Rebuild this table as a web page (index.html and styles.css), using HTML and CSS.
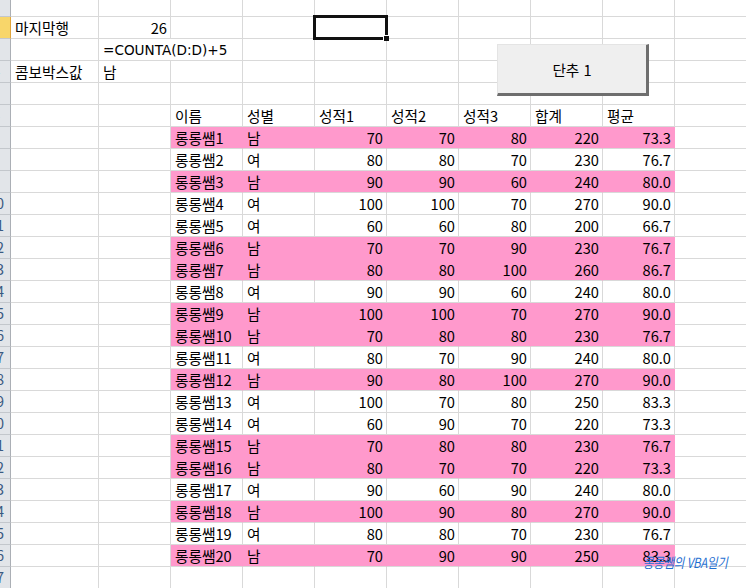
FILE: index.html
```html
<!DOCTYPE html>
<html lang="ko">
<head>
<meta charset="utf-8">
<title>Sheet</title>
<link rel="stylesheet" href="styles.css">
</head>
<body>
<div class="sheet">
  <!-- row 1 -->
  <div class="h"><span>1</span></div><div class="c"></div><div class="c"></div><div class="c"></div><div class="c"></div><div class="c"></div><div class="c"></div><div class="c"></div><div class="c"></div><div class="c"></div><div class="c"></div>
  <!-- row 2 -->
  <div class="h sel"><span>2</span></div><div class="c">마지막행</div><div class="c n">26</div><div class="c"></div><div class="c"></div><div class="c active"><div class="cursor"><i class="handle"></i></div></div><div class="c"></div><div class="c"></div><div class="c"></div><div class="c"></div><div class="c"></div>
  <!-- row 3 -->
  <div class="h"><span>3</span></div><div class="c"></div><div class="c span2 formula">=COUNTA(D:D)+5</div><div class="c"></div><div class="c"></div><div class="c"></div><div class="c"></div><div class="c"></div><div class="c"></div><div class="c"></div>
  <!-- row 4 -->
  <div class="h"><span>4</span></div><div class="c">콤보박스값</div><div class="c">남</div><div class="c"></div><div class="c"></div><div class="c"></div><div class="c"></div><div class="c"></div><div class="c"></div><div class="c"></div><div class="c"></div>
  <!-- row 5 -->
  <div class="h"><span>5</span></div><div class="c"></div><div class="c"></div><div class="c"></div><div class="c"></div><div class="c"></div><div class="c"></div><div class="c"></div><div class="c"></div><div class="c"></div><div class="c"></div>
  <!-- row 6 -->
  <div class="h"><span>6</span></div><div class="c"></div><div class="c"></div><div class="c">이름</div><div class="c">성별</div><div class="c">성적1</div><div class="c">성적2</div><div class="c">성적3</div><div class="c">합계</div><div class="c">평균</div><div class="c"></div>
  <!-- data -->
  <div class="h"><span>7</span></div><div class="c"></div><div class="c"></div><div class="c p">롱롱쌤1</div><div class="c p">남</div><div class="c p n">70</div><div class="c p n">70</div><div class="c p n">80</div><div class="c p n">220</div><div class="c p n">73.3</div><div class="c"></div>
  <div class="h"><span>8</span></div><div class="c"></div><div class="c"></div><div class="c">롱롱쌤2</div><div class="c">여</div><div class="c n">80</div><div class="c n">80</div><div class="c n">70</div><div class="c n">230</div><div class="c n">76.7</div><div class="c"></div>
  <div class="h"><span>9</span></div><div class="c"></div><div class="c"></div><div class="c p">롱롱쌤3</div><div class="c p">남</div><div class="c p n">90</div><div class="c p n">90</div><div class="c p n">60</div><div class="c p n">240</div><div class="c p n">80.0</div><div class="c"></div>
  <div class="h"><span>10</span></div><div class="c"></div><div class="c"></div><div class="c">롱롱쌤4</div><div class="c">여</div><div class="c n">100</div><div class="c n">100</div><div class="c n">70</div><div class="c n">270</div><div class="c n">90.0</div><div class="c"></div>
  <div class="h"><span>11</span></div><div class="c"></div><div class="c"></div><div class="c">롱롱쌤5</div><div class="c">여</div><div class="c n">60</div><div class="c n">60</div><div class="c n">80</div><div class="c n">200</div><div class="c n">66.7</div><div class="c"></div>
  <div class="h"><span>12</span></div><div class="c"></div><div class="c"></div><div class="c p pb">롱롱쌤6</div><div class="c p pb">남</div><div class="c p pb n">70</div><div class="c p pb n">70</div><div class="c p pb n">90</div><div class="c p pb n">230</div><div class="c p pb n">76.7</div><div class="c"></div>
  <div class="h"><span>13</span></div><div class="c"></div><div class="c"></div><div class="c p">롱롱쌤7</div><div class="c p">남</div><div class="c p n">80</div><div class="c p n">80</div><div class="c p n">100</div><div class="c p n">260</div><div class="c p n">86.7</div><div class="c"></div>
  <div class="h"><span>14</span></div><div class="c"></div><div class="c"></div><div class="c">롱롱쌤8</div><div class="c">여</div><div class="c n">90</div><div class="c n">90</div><div class="c n">60</div><div class="c n">240</div><div class="c n">80.0</div><div class="c"></div>
  <div class="h"><span>15</span></div><div class="c"></div><div class="c"></div><div class="c p pb">롱롱쌤9</div><div class="c p pb">남</div><div class="c p pb n">100</div><div class="c p pb n">100</div><div class="c p pb n">70</div><div class="c p pb n">270</div><div class="c p pb n">90.0</div><div class="c"></div>
  <div class="h"><span>16</span></div><div class="c"></div><div class="c"></div><div class="c p">롱롱쌤10</div><div class="c p">남</div><div class="c p n">70</div><div class="c p n">80</div><div class="c p n">80</div><div class="c p n">230</div><div class="c p n">76.7</div><div class="c"></div>
  <div class="h"><span>17</span></div><div class="c"></div><div class="c"></div><div class="c">롱롱쌤11</div><div class="c">여</div><div class="c n">80</div><div class="c n">70</div><div class="c n">90</div><div class="c n">240</div><div class="c n">80.0</div><div class="c"></div>
  <div class="h"><span>18</span></div><div class="c"></div><div class="c"></div><div class="c p">롱롱쌤12</div><div class="c p">남</div><div class="c p n">90</div><div class="c p n">80</div><div class="c p n">100</div><div class="c p n">270</div><div class="c p n">90.0</div><div class="c"></div>
  <div class="h"><span>19</span></div><div class="c"></div><div class="c"></div><div class="c">롱롱쌤13</div><div class="c">여</div><div class="c n">100</div><div class="c n">70</div><div class="c n">80</div><div class="c n">250</div><div class="c n">83.3</div><div class="c"></div>
  <div class="h"><span>20</span></div><div class="c"></div><div class="c"></div><div class="c">롱롱쌤14</div><div class="c">여</div><div class="c n">60</div><div class="c n">90</div><div class="c n">70</div><div class="c n">220</div><div class="c n">73.3</div><div class="c"></div>
  <div class="h"><span>21</span></div><div class="c"></div><div class="c"></div><div class="c p pb">롱롱쌤15</div><div class="c p pb">남</div><div class="c p pb n">70</div><div class="c p pb n">80</div><div class="c p pb n">80</div><div class="c p pb n">230</div><div class="c p pb n">76.7</div><div class="c"></div>
  <div class="h"><span>22</span></div><div class="c"></div><div class="c"></div><div class="c p">롱롱쌤16</div><div class="c p">남</div><div class="c p n">80</div><div class="c p n">70</div><div class="c p n">70</div><div class="c p n">220</div><div class="c p n">73.3</div><div class="c"></div>
  <div class="h"><span>23</span></div><div class="c"></div><div class="c"></div><div class="c">롱롱쌤17</div><div class="c">여</div><div class="c n">90</div><div class="c n">60</div><div class="c n">90</div><div class="c n">240</div><div class="c n">80.0</div><div class="c"></div>
  <div class="h"><span>24</span></div><div class="c"></div><div class="c"></div><div class="c p">롱롱쌤18</div><div class="c p">남</div><div class="c p n">100</div><div class="c p n">90</div><div class="c p n">80</div><div class="c p n">270</div><div class="c p n">90.0</div><div class="c"></div>
  <div class="h"><span>25</span></div><div class="c"></div><div class="c"></div><div class="c">롱롱쌤19</div><div class="c">여</div><div class="c n">80</div><div class="c n">80</div><div class="c n">70</div><div class="c n">230</div><div class="c n">76.7</div><div class="c"></div>
  <div class="h"><span>26</span></div><div class="c"></div><div class="c"></div><div class="c p">롱롱쌤20</div><div class="c p">남</div><div class="c p n">70</div><div class="c p n">90</div><div class="c p n">90</div><div class="c p n">250</div><div class="c p n">83.3</div><div class="c"></div>
  <!-- row 27 -->
  <div class="h"><span>27</span></div><div class="c"></div><div class="c"></div><div class="c"></div><div class="c"></div><div class="c"></div><div class="c"></div><div class="c"></div><div class="c"></div><div class="c"></div><div class="c"></div>

  <div class="button">단추 1</div>
  <div class="watermark">롱롱쌤의 VBA일기</div>
</div>
</body>
</html>
```

FILE: styles.css
```css
html, body {
  margin: 0;
  padding: 0;
  background: #ffffff;
  overflow: hidden;
}

body {
  width: 746px;
  height: 588px;
  font-family: "Noto Sans CJK KR", "Noto Sans", sans-serif;
}

.sheet {
  position: relative;
  display: grid;
  grid-template-columns: 11px 88px repeat(9, 72px);
  grid-template-rows: 17px;
  grid-auto-rows: 22px;
  width: 747px;
}

.c {
  box-sizing: border-box;
  border-right: 1px solid #d9d9d9;
  border-bottom: 1px solid #d9d9d9;
  padding: 0 3px 0 4px;
  font-size: 14.67px;
  line-height: 22px;
  color: #000;
  white-space: nowrap;
  overflow: hidden;
  position: relative;
}

.n {
  text-align: right;
}

.span2 {
  grid-column: span 2;
  overflow: visible;
}

.formula {
  font-family: "DejaVu Sans", "Noto Sans CJK KR", sans-serif;
  font-size: 13.6px;
}

.p {
  background: #ff99cc;
  border-right-color: #ff99cc;
}

.pb {
  border-bottom-color: #ff99cc;
}

.h {
  box-sizing: border-box;
  background: #e2e5e9;
  border-right: 1px solid #abafb5;
  border-bottom: 1px solid #c3c7cc;
  overflow: hidden;
  position: relative;
}

.h span {
  position: absolute;
  right: 0;
  width: 28px;
  bottom: 0;
  text-align: center;
  font-size: 14.5px;
  line-height: 22px;
  color: #3b5a82;
}

.h.sel {
  background: #f8d66a;
  border-right-color: #e0a53c;
}

.active {
  overflow: visible;
}

.cursor {
  position: absolute;
  box-sizing: border-box;
  left: -2px;
  top: -2px;
  width: 75px;
  height: 25px;
  border: 3px solid #111;
  z-index: 2;
}

.handle {
  position: absolute;
  right: -4px;
  bottom: -4px;
  width: 5px;
  height: 5px;
  background: #111;
  border: 1px solid #fff;
  border-right: 0;
  border-bottom: 0;
}

.button {
  position: absolute;
  left: 497px;
  top: 44px;
  width: 152px;
  height: 52px;
  box-sizing: border-box;
  background: #efefef;
  border-top: 1px solid #e4e4e4;
  border-left: 1px solid #e4e4e4;
  border-right: 3px solid #6e6e6e;
  border-bottom: 3px solid #6e6e6e;
  display: flex;
  align-items: center;
  justify-content: center;
  font-size: 14.67px;
  color: #000;
  z-index: 3;
}

.watermark {
  position: absolute;
  left: 643px;
  top: 552px;
  font-size: 14px;
  color: #1f6fd1;
  font-style: italic;
  white-space: nowrap;
  letter-spacing: -0.4px;
  transform: scaleX(0.82);
  transform-origin: left center;
  z-index: 4;
}
```
